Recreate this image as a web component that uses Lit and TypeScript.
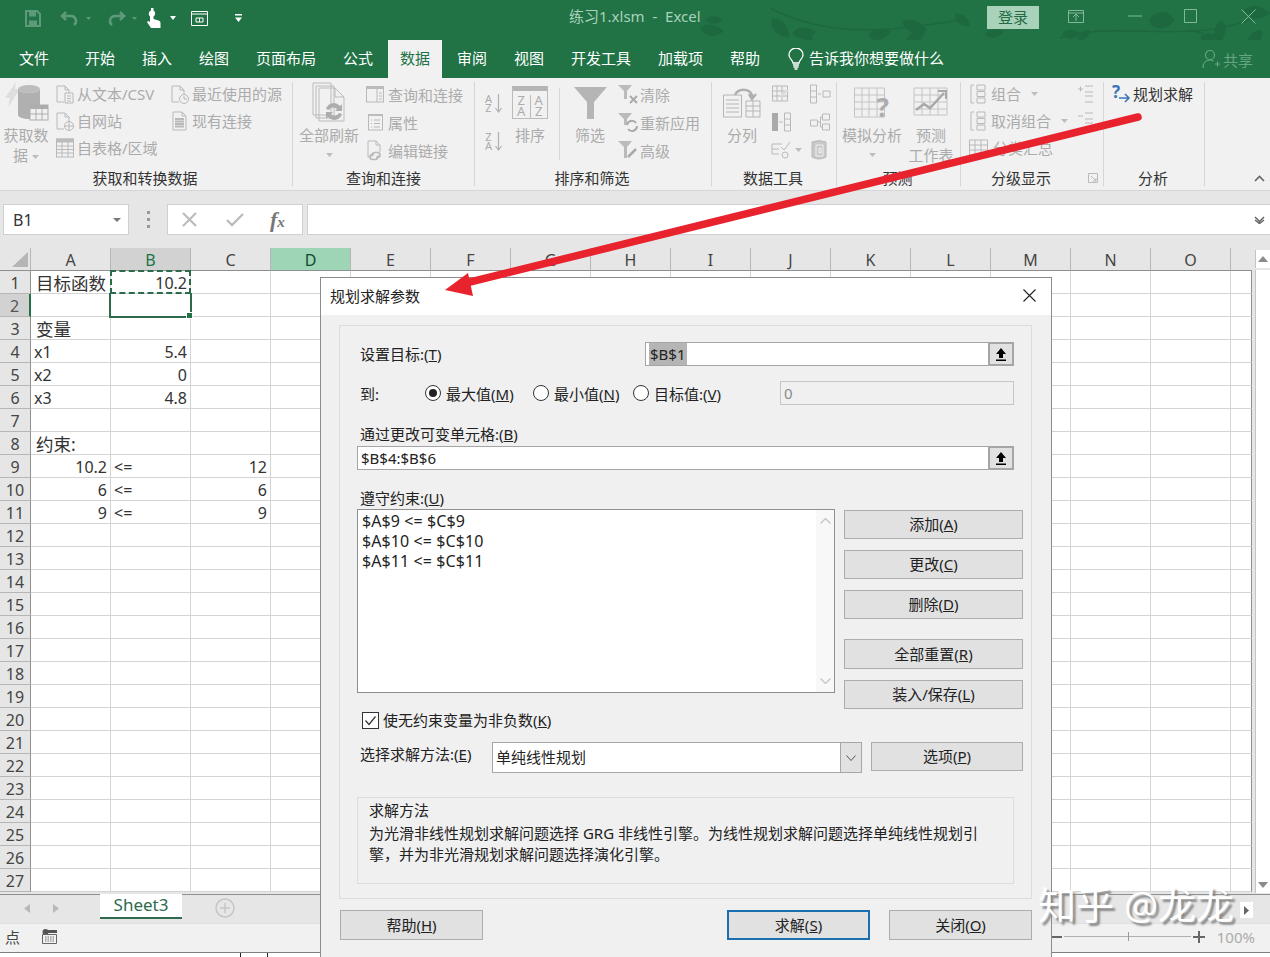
import { LitElement, css, html, nothing } from 'lit';
import { customElement } from 'lit/decorators.js';

const COLS = 'ABCDEFGHIJKLMNO'.split('');
const ROWS = Array.from({ length: 27 }, (_, i) => i + 1);

// cell content of the sheet; r = right aligned, t = text with a small indent
const CELLS: Record<string, { v: string; cls?: string }> = {
  A1: { v: '目标函数', cls: 't' },
  B1: { v: '10.2', cls: 'r' },
  A3: { v: '变量', cls: 't' },
  A4: { v: 'x1' },
  B4: { v: '5.4', cls: 'r' },
  A5: { v: 'x2' },
  B5: { v: '0', cls: 'r' },
  A6: { v: 'x3' },
  B6: { v: '4.8', cls: 'r' },
  A8: { v: '约束:', cls: 't' },
  A9: { v: '10.2', cls: 'r' },
  B9: { v: '<=' },
  C9: { v: '12', cls: 'r' },
  A10: { v: '6', cls: 'r' },
  B10: { v: '<=' },
  C10: { v: '6', cls: 'r' },
  A11: { v: '9', cls: 'r' },
  B11: { v: '<=' },
  C11: { v: '9', cls: 'r' },
};

const TABS = [
  { t: '文件', w: 54, gap: 12 },
  { t: '开始', w: 54, gap: 3 },
  { t: '插入', w: 54, gap: 3 },
  { t: '绘图', w: 54, gap: 3 },
  { t: '页面布局', w: 84, gap: 3 },
  { t: '公式', w: 54, gap: 3 },
  { t: '数据', w: 54, gap: 3, active: true },
  { t: '审阅', w: 54, gap: 3 },
  { t: '视图', w: 54, gap: 3 },
  { t: '开发工具', w: 84, gap: 3 },
  { t: '加载项', w: 69, gap: 3 },
  { t: '帮助', w: 54, gap: 3 },
];

// x, y, rotation, scale of each leaf in the title bar picture
const LEAVES = [
  [700, 28, 30, 1], [722, 20, 200, 0.7], [772, 18, 70, 1.1], [792, 33, 20, 1], [812, 36, 150, 0.8],
  [868, 36, 10, 1], [902, 22, 40, 1.1], [925, 32, 170, 1], [955, 14, 60, 0.8], [985, 34, 15, 0.8],
  [1062, 34, 20, 0.8], [1090, 30, 160, 0.7], [1150, 24, 10, 1.1], [1172, 16, 190, 1], [1200, 36, 40, 1.2],
  [1222, 20, 120, 1], [1212, 46, 80, 0.8], [1244, 10, 30, 1.1], [1262, 30, 150, 1],
];

const u = (before: string, key: string, after = ')') => html`${before}<u>${key}</u>${after}`;

const docText = html`<svg class="i" width="20" height="20" viewBox="0 0 20 20"><path d="M2 2h8l4 4v3 M2 2v16h7 M10 2v4h4 M10 9h8v10h-8z M12 12h4M12 14.500h4M12 17h4" fill="none"/></svg>`;
const docWeb = html`<svg class="i" width="20" height="20" viewBox="0 0 20 20"><path d="M2 2h8l4 4v5 M2 2v16h7 M10 2v4h4" fill="none"/><circle cx="14" cy="15" r="4.500" fill="none"/><path d="M9.500 15h9M14 10.500v9" fill="none"/></svg>`;
const docClock = html`<svg class="i" width="20" height="20" viewBox="0 0 20 20"><path d="M2 2h8l4 4v5 M2 2v16h7 M10 2v4h4" fill="none"/><circle cx="14" cy="15" r="4.500" fill="none"/><path d="M14 12v3h3" fill="none"/></svg>`;
const docLines = html`<svg class="i" width="20" height="20" viewBox="0 0 20 20"><path d="M3 1h9l4 4v14H3z M12 1v4h4" fill="none"/><path d="M5 8h9M5 10.500h9M5 13h9M5 15.500h9" stroke-width="2" fill="none"/></svg>`;
const tableIcon = html`<svg class="i" width="20" height="22" viewBox="0 0 20 22"><rect x="1.500" y="2" width="17" height="18" fill="none"/><rect x="1" y="1.500" width="18" height="4" fill="#bbb" stroke="none"/><path d="M1.500 9h17M1.500 12.500h17M1.500 16h17M7 5v15M13 5v15" fill="none"/></svg>`;
const queryIcon = html`<svg class="i" width="20" height="20" viewBox="0 0 20 20"><rect x="1.500" y="3" width="17" height="15" fill="none"/><rect x="1" y="2" width="18" height="3" fill="#bbb" stroke="none"/><path d="M12 5v13M14 9h3M14 12h3M14 15h3" fill="none"/></svg>`;
const propIcon = html`<svg class="i" width="20" height="20" viewBox="0 0 20 20"><rect x="3.500" y="3" width="14" height="15" fill="none"/><rect x="3" y="2" width="15" height="2" fill="#bbb" stroke="none"/><path d="M6 8h1M9 8h6M6 11.500h1M9 11.500h6M6 15h1M9 15h6" fill="none"/></svg>`;
const linkIcon = html`<svg class="i" width="20" height="22" viewBox="0 0 20 22"><path d="M3 2h8l4 4v7 M3 2v16h3 M11 2v4h4" fill="none"/><path d="M9 15.500h-1.500a2.500 2.500 0 0 0 0 5h3a2.500 2.500 0 0 0 2-4 M11 18.500h1.500a2.500 2.500 0 0 0 0-5h-3a2.500 2.500 0 0 0-2 4" fill="none" stroke-width="1.600"/></svg>`;
const chevron = html`<svg class="caret" width="7" height="4" viewBox="0 0 7 4"><path d="M0 0h7L3.500 4z" fill="#bdbdbd"/></svg>`;
const sortArrow = html`<svg width="7" height="19" viewBox="0 0 7 19"><path d="M3.500 0v18M.5 14l3 4 3-4" fill="none" stroke="#b0b0b0" stroke-width="1.200"/></svg>`;

@customElement('app-root')
export class AppRoot extends LitElement {
  private titleBar() {
    return html`
      <div class="title">
        <svg class="leaves" width="1270" height="60" viewBox="0 0 1270 60">
          ${LEAVES.map(([x, y, r, s]) => html`<svg x="0" y="0" width="1270" height="60" style="overflow:visible"><path transform="translate(${x} ${y}) rotate(${r}) scale(${s})" d="M0 0C3-8 11-12 22-9C19 0 9 6 0 0Z" fill="#1e6840"/></svg>`)}
          <path d="M770 8C830 40 900 30 960 20M1060 38C1120 18 1190 50 1270 12M1190 30C1210 34 1225 45 1216 50" fill="none" stroke="#1e6840" stroke-width="1.500"/>
        </svg>
        <div class="qat">
          <svg class="q" style="margin-left:25px" width="16" height="17" viewBox="0 0 16 17"><path d="M1 1h11l3 3v12H1z" fill="none" stroke="#5d9a7a" stroke-width="2"/><path d="M4 1.500h7v5H4zM4 10.500h8v5H4z" fill="#5d9a7a"/></svg>
          <svg class="q" style="margin-left:19px" width="20" height="17" viewBox="0 0 20 17"><path d="M6 2L2 6l4 4M2 6h9a5 5 0 0 1 3 9" fill="none" stroke="#5d9a7a" stroke-width="2.500"/></svg>
          <svg class="q" style="margin-left:6px" width="5" height="3" viewBox="0 0 5 3"><path d="M0 0h5L2.500 3z" fill="#5d9a7a"/></svg>
          <svg class="q" style="margin-left:15px" width="20" height="17" viewBox="0 0 20 17"><path d="M14 2l4 4-4 4M18 6H9a5 5 0 0 0-3 9" fill="none" stroke="#5d9a7a" stroke-width="2.500"/></svg>
          <svg class="q" style="margin-left:6px" width="5" height="3" viewBox="0 0 5 3"><path d="M0 0h5L2.500 3z" fill="#5d9a7a"/></svg>
          <svg class="q" style="margin-left:8px" width="16" height="22" viewBox="0 0 16 22"><path d="M6 1h2.500v2.500a3.500 3.500 0 0 1 0 6V12l5 1.500c1.500.5 2 1 2 3V21H6l-4-6 1-1 2 1V9.500a3.500 3.500 0 0 1 1-6z" fill="#fff"/></svg>
          <svg class="q" style="margin-left:9px" width="6" height="4" viewBox="0 0 6 4"><path d="M0 0h6L3 4z" fill="#fff"/></svg>
          <svg class="q" style="margin-left:15px" width="17" height="15" viewBox="0 0 17 15"><path d="M.5.500h16v14H.5zM.5 3h16M5 7h7v4H5zM8.500 7v4" fill="none" stroke="#fff"/></svg>
          <svg class="q" style="margin-left:27px" width="7" height="8" viewBox="0 0 7 8"><path d="M0 0h7v1.500H0zM0 3.500h7L3.500 8z" fill="#fff"/></svg>
        </div>
        <div class="doc-name">练习1.xlsm&nbsp; -&nbsp; Excel</div>
        <div class="signin">登录</div>
        <svg class="wc" style="margin-left:29px" width="16" height="16" viewBox="0 0 16 16"><path d="M.5 2.500h15v12H.5zM.5 5h15M5 9l3-3 3 3M8 6v7" fill="none" stroke="#83b99b"/></svg>
        <svg class="wc" style="margin-left:44px" width="14" height="2" viewBox="0 0 14 2"><path d="M0 1h14" stroke="#83b99b"/></svg>
        <svg class="wc" style="margin-left:42px" width="13" height="14" viewBox="0 0 13 14"><path d="M.5.500h12v13H.5z" fill="none" stroke="#83b99b"/></svg>
        <svg class="wc" style="margin-left:44px" width="15" height="15" viewBox="0 0 15 15"><path d="M.5.500l14 14M14.500.500l-14 14" stroke="#83b99b"/></svg>
      </div>`;
  }

  private tabBar() {
    return html`
      <div class="tabs">
        ${TABS.map(
          (t) => html`<div class="tab ${t.active ? 'on' : ''}" style="width:${t.w}px;margin-right:${t.gap}px">${t.t}</div>`,
        )}
        <svg class="bulb" width="16" height="22" viewBox="0 0 16 22"><path d="M5 15c0-3-4-4-4-8a7 7 0 0 1 14 0c0 4-4 5-4 8z" fill="none" stroke="#fff" stroke-width="1.300"/><path d="M5 17h6M5.500 19h5M6.500 21h3" stroke="#fff" stroke-width="1.300"/></svg>
        <div class="tell">告诉我你想要做什么</div>
        <div class="share">
          <svg width="18" height="20" viewBox="0 0 18 20"><circle cx="8" cy="6" r="4.500" fill="none" stroke="#68a583" stroke-width="1.200"/><path d="M1 19c0-5 3-8 7-8 1.500 0 2.500.5 3.500 1M13 15h5M15.500 12.500v5" fill="none" stroke="#68a583" stroke-width="1.200"/></svg>
          <span>共享</span>
        </div>
      </div>`;
  }

  private ribbon() {
    return html`
      <div class="ribbon">
        <section style="width:293px">
          <div class="body">
            <div class="big" style="width:52px">
              <div class="ico">
                <svg width="46" height="44" viewBox="0 0 46 44">
                  <path d="M13 1L2 17l5 0-2 9L17 8l-5 0z" fill="#dedede"/>
                  <ellipse cx="26" cy="8" rx="11" ry="4" fill="#bdbdbd"/>
                  <path d="M15 8v26c0 2 5 4 11 4s11-2 11-4V8c0 2-5 4-11 4S15 10 15 8z" fill="#b0b0b0"/>
                  <rect x="27" y="24" width="18" height="15" fill="#f1f1f1" stroke="#adadad"/>
                  <rect x="27" y="24" width="18" height="4" fill="#adadad"/>
                  <path d="M27 33h18M33 28v11M39 28v11" stroke="#adadad"/>
                </svg>
              </div>
              <span>获取数</span><span>据 ${chevron}</span>
            </div>
            <div class="col" style="width:115px;margin-left:3px">
              <div class="sm">${docText}<span>从文本/CSV</span></div>
              <div class="sm">${docWeb}<span>自网站</span></div>
              <div class="sm">${tableIcon}<span>自表格/区域</span></div>
            </div>
            <div class="col">
              <div class="sm">${docClock}<span>最近使用的源</span></div>
              <div class="sm">${docLines}<span>现有连接</span></div>
            </div>
          </div>
          <footer>获取和转换数据</footer>
        </section>
        <section style="width:182px">
          <div class="body">
            <div class="big" style="width:60px;margin-left:6px">
              <div class="ico">
                <svg width="36" height="44" viewBox="0 0 36 44">
                  <path d="M2 2h18v32H2zM5 5h18v32H5zM8 7h16l9 9v24H8zM24 7v9h9" fill="#f1f1f1" stroke="#bbb"/>
                  <path d="M15 28a8 8 0 0 1 14-3l2-2v7h-7l2-2a5 5 0 0 0-8 1zM31 33a8 8 0 0 1-14 3l-2 2v-7h7l-2 2a5 5 0 0 0 8-1z" fill="#adadad"/>
                </svg>
              </div>
              <span>全部刷新</span><span class="cr">${chevron}</span>
            </div>
            <div class="col tall" style="margin-left:6px">
              <div class="sm">${queryIcon}<span>查询和连接</span></div>
              <div class="sm">${propIcon}<span>属性</span></div>
              <div class="sm">${linkIcon}<span>编辑链接</span></div>
            </div>
          </div>
          <footer class="f2">查询和连接</footer>
        </section>
        <section style="width:237px">
          <div class="body">
            <div class="az">
              <div class="azrow"><div class="azl"><span>A</span><span>Z</span></div>${sortArrow}</div>
              <div class="azrow"><div class="azl"><span>Z</span><span>A</span></div>${sortArrow}</div>
            </div>
            <div class="big" style="width:36px;margin-left:10px">
              <div class="ico">
                <div class="sortbox">
                  <div class="azl"><span>Z</span><span>A</span></div>
                  <div class="azl"><span>A</span><span>Z</span></div>
                </div>
              </div>
              <span>排序</span>
            </div>
            <div class="vsep" style="margin-left:11px"></div>
            <div class="big" style="width:34px;margin-left:13px">
              <div class="ico">
                <svg width="33" height="34" viewBox="0 0 33 34"><path d="M0 1h33L20 16v17h-7V16z" fill="#b5b5b5"/></svg>
              </div>
              <span>筛选</span>
            </div>
            <div class="col tall" style="margin-left:10px">
              <div class="sm fn">
                <svg class="i2" width="22" height="22" viewBox="0 0 22 22"><path d="M1 2h14L10 8v8H7V8z" fill="#bbb"/><path d="M13 13l7 7M20 13l-7 7" stroke="#aaa" stroke-width="2"/></svg><span>清除</span>
              </div>
              <div class="sm fn">
                <svg class="i2" width="22" height="22" viewBox="0 0 22 22"><path d="M1 2h14L10 8v6H7V8z" fill="#bbb"/><path d="M10 14a5 5 0 0 1 9-2M20 15a5 5 0 0 1-9 3" fill="none" stroke="#aaa" stroke-width="2"/></svg><span>重新应用</span>
              </div>
              <div class="sm fn">
                <svg class="i2" width="22" height="22" viewBox="0 0 22 22"><path d="M1 2h14L10 8v11H7V8z" fill="#bbb"/><path d="M11 18l8-8" stroke="#aaa" stroke-width="2.500"/></svg><span>高级</span>
              </div>
            </div>
          </div>
          <footer>排序和筛选</footer>
        </section>
        <section style="width:125px">
          <div class="body">
            <div class="big" style="width:38px;margin-left:11px">
              <div class="ico">
                <svg width="38" height="36" viewBox="0 0 38 36"><path d="M.5 10h18v22H.5zM3 15h13M3 19h13M3 23h13M3 27h13" fill="#f1f1f1" stroke="#b5b5b5"/><path d="M23 16h14v16H23zM23 21h14M23 26h14M30 16v16" fill="#f1f1f1" stroke="#b5b5b5"/><path d="M12 10a9 8 0 0 1 17 0v3M26 9l3 5 4-5" fill="none" stroke="#b0b0b0" stroke-width="2.500"/></svg>
              </div>
              <span>分列</span>
            </div>
            <div class="tools">
              <svg class="i" width="20" height="20" viewBox="0 0 20 20"><path d="M1.500 2h15v15h-15zM1.500 7h15M1.500 12h15M6 2v15M11 2v15" fill="none"/><path d="M10 10l6-5 2 2-6 5-2 1z" fill="#ddd" stroke="none"/></svg>
              <svg class="i" width="22" height="20" viewBox="0 0 22 20"><path d="M1.500 1h6v18h-6zM1.500 7h6M1.500 13h6M14 7h7v6h-7zM9 10h3" fill="none"/></svg>
              <svg class="i" width="20" height="20" viewBox="0 0 20 20"><rect x="1" y="1" width="6" height="18" fill="#aaa" stroke="none"/><path d="M13.500 1h6v18h-6zM13.500 7h6M13.500 13h6M8 10h4" fill="none"/></svg>
              <svg class="i" width="22" height="20" viewBox="0 0 22 20"><path d="M1.500 8h7v6h-7zM13.500 2h7v6h-7zM13.500 12h7v6h-7zM8.500 10h3v-5h2M11.500 10v5h2" fill="none"/></svg>
              <div class="dv"><svg class="i" width="22" height="20" viewBox="0 0 22 20"><path d="M1 4h10M1 9h7M1 14h7M1 4v10" fill="none"/><path d="M10 7l3 3 6-8" fill="none"/><circle cx="14" cy="15" r="3" fill="none"/></svg>${chevron}</div>
              <svg class="i" width="20" height="22" viewBox="0 0 20 22"><path d="M3 3q7-3 14 0v15q-7 4-14 0z" fill="#c8c8c8"/><path d="M7 6h7v11H7zM10 9h2v5h-2z" fill="none" stroke="#f1f1f1"/></svg>
            </div>
          </div>
          <footer>数据工具</footer>
        </section>
        <section style="width:124px">
          <div class="body">
            <div class="big" style="width:60px;margin-left:5px">
              <div class="ico">
                <div class="whatif">
                  <svg width="31" height="33" viewBox="0 0 31 33"><path d="M.5 3h30v29H.5zM.5 10h30M.5 17h30M.5 24h30M8 3v29M15 3v29M23 3v29" fill="#f1f1f1" stroke="#c4c4c4"/></svg>
                  <span>?</span>
                </div>
              </div>
              <span>模拟分析</span><span class="cr">${chevron}</span>
            </div>
            <div class="big" style="width:46px;margin-left:6px">
              <div class="ico">
                <svg width="36" height="36" viewBox="0 0 36 36"><path d="M1 3h33v27H1zM1 10h33M1 17h33M1 24h33M9 3v27M17 3v27M25 3v27" fill="#f1f1f1" stroke="#c4c4c4"/><path d="M3 25l8-6 6 4 14-15" fill="none" stroke="#a8a8a8" stroke-width="2.500"/><path d="M25 6h8v8" fill="none" stroke="#a8a8a8" stroke-width="2"/></svg>
              </div>
              <span>预测</span><span>工作表</span>
            </div>
          </div>
          <footer>预测</footer>
        </section>
        <section style="width:143px">
          <div class="body outline">
            <div class="col" style="margin-left:7px">
              <div class="sm ol">${this.outlineIcon()}<span>组合</span>${chevron}
                <svg class="pm" width="16" height="18" viewBox="0 0 16 18"><path d="M0 4h5M2.500 1.500v5M7 1h8M7 7h8M7 11h8M7 17h8" fill="none"/></svg>
              </div>
              <div class="sm ol">${this.outlineIcon()}<span>取消组合</span>${chevron}
                <svg class="pm p2" width="16" height="18" viewBox="0 0 16 18"><path d="M0 4h5M7 1h8M7 7h8M7 11h8M7 17h8" fill="none"/></svg>
              </div>
              <div class="sm ol">
                <svg class="i" width="22" height="20" viewBox="0 0 22 20"><path d="M1.500 2h18v15h-18zM1.500 7h18M1.500 12h18M7 2v15M13 2v15" fill="none"/></svg><span>分类汇总</span>
              </div>
            </div>
          </div>
          <footer class="f6">分级显示
            <svg class="launch" width="10" height="10" viewBox="0 0 10 10"><path d="M.5.500h9v9h-9zM3 3l5 5M8 5v3H5" fill="none" stroke="#bbb"/></svg>
          </footer>
        </section>
        <section style="width:101px">
          <div class="body">
            <div class="sm solver">
              <div class="sq">
                <span>?</span>
                <svg width="12" height="10" viewBox="0 0 12 10"><path d="M0 5h10M6 1l4 4-4 4" fill="none" stroke="#3f74b5" stroke-width="1.600"/></svg>
              </div>
              <span>规划求解</span>
            </div>
          </div>
          <footer>分析</footer>
        </section>
        <svg class="collapse" width="11" height="7" viewBox="0 0 11 7"><path d="M1 6l4.500-4.500L10 6" fill="none" stroke="#666" stroke-width="1.600"/></svg>
      </div>`;
  }

  private outlineIcon() {
    return html`<svg class="i" width="20" height="20" viewBox="0 0 20 20"><path d="M6 1h-3v18h3M9 1h8v5H9zM9 7.500h8v5H9zM9 14h8v5H9z" fill="none"/></svg>`;
  }

  private formulaBar() {
    return html`
      <div class="fbar">
        <div class="namebox"><span>B1</span><svg width="8" height="4" viewBox="0 0 8 4"><path d="M0 0h8L4 4z" fill="#777"/></svg></div>
        <div class="grip"><i></i><i></i><i></i></div>
        <div class="fxbox">
          <svg class="fx1" width="17" height="17" viewBox="0 0 17 17"><path d="M2 2l13 13M15 2L2 15" stroke="#bcbcbc" stroke-width="2.200"/></svg>
          <svg class="fx2" width="18" height="15" viewBox="0 0 18 15"><path d="M1 8l5 5L17 2" fill="none" stroke="#bcbcbc" stroke-width="2.400"/></svg>
          <span class="fx">f<small>x</small></span>
        </div>
        <div class="finput">
          <svg width="11" height="8" viewBox="0 0 11 8"><path d="M1 1l4.500 4.500L10 1M1 4l4.500 3.500L10 4" fill="none" stroke="#666" stroke-width="1.500"/></svg>
        </div>
      </div>`;
  }

  private sheet() {
    return html`
      <div class="sheetwrap">
        <div class="sheet">
          <div class="hd corner"><svg width="16" height="15" viewBox="0 0 16 15"><path d="M16 0v15H0z" fill="#b5b5b5"/></svg></div>
          ${COLS.map((c) => html`<div class="hd col-h ${c === 'B' ? 'sel' : ''} ${c === 'D' ? 'act' : ''}">${c}</div>`)}
          <div class="hd filler"></div>
          ${ROWS.map(
            (r) => html`
              <div class="hd row-h ${r === 2 ? 'sel' : ''}">${r}</div>
              ${COLS.map((c) => {
                const cell = CELLS[c + r];
                return html`<div class="cell ${cell?.cls ?? ''}">${cell ? cell.v : nothing}</div>`;
              })}
              <div class="cell last"></div>`,
          )}
          <div class="ants"></div>
          <div class="cursor"><b></b></div>
        </div>
        <div class="vscroll">
          <div class="varrow"><svg width="10" height="6" viewBox="0 0 10 6"><path d="M0 6h10L5 0z" fill="#8a8a8a"/></svg></div>
          <div class="vthumb"></div>
          <div class="varrow down"><svg width="10" height="6" viewBox="0 0 10 6"><path d="M0 0h10L5 6z" fill="#8a8a8a"/></svg></div>
        </div>
      </div>`;
  }

  private sheetTabs() {
    return html`
      <div class="stabs">
        <svg class="nav" width="6" height="9" viewBox="0 0 6 9"><path d="M6 0v9L0 4.500z" fill="#b8b8b8"/></svg>
        <svg class="nav n2" width="6" height="9" viewBox="0 0 6 9"><path d="M0 0v9l6-4.500z" fill="#b8b8b8"/></svg>
        <div class="stab">Sheet3</div>
        <svg class="plus" width="20" height="20" viewBox="0 0 20 20"><circle cx="10" cy="10" r="9" fill="none" stroke="#c6c6c6" stroke-width="1.500"/><path d="M5 10h10M10 5v10" stroke="#c6c6c6" stroke-width="1.500"/></svg>
        <div class="hscroll-end"><svg width="5" height="9" viewBox="0 0 5 9"><path d="M0 0v9l5-4.500z" fill="#666"/></svg></div>
      </div>
      <div class="status">
        <span class="pt">点</span>
        <svg class="macro" width="15" height="15" viewBox="0 0 15 15"><circle cx="3.500" cy="3" r="3" fill="#555"/><rect x="4" y="1" width="11" height="3" fill="#555"/><path d="M.5 5.500h14v9H.5z" fill="#f1f1f1" stroke="#666"/><path d="M3 8h9M3 10h9M3 12h9" stroke="#777" stroke-dasharray="1.500 1"/></svg>
        <div class="zoom">
          <svg width="12" height="2" viewBox="0 0 12 2"><path d="M0 1h12" stroke="#666" stroke-width="2"/></svg>
          <div class="track"><i></i></div>
          <svg width="12" height="12" viewBox="0 0 12 12"><path d="M0 6h12M6 0v12" stroke="#666" stroke-width="2"/></svg>
          <span>100%</span>
        </div>
      </div>
      <div class="desk"><i style="margin-left:240px"></i><i style="margin-left:26px"></i></div>`;
  }

  private dialog() {
    return html`
      <div class="dlg">
        <div class="dlg-title">
          <span>规划求解参数</span>
          <svg width="13" height="13" viewBox="0 0 13 13"><path d="M.5.500l12 12M12.500.500l-12 12" stroke="#222" stroke-width="1.100"/></svg>
        </div>
        <div class="dlg-body">
          <div class="panel">
            <div class="row r1">
              <label class="l1">设置目标:(${u('', 'T')}</label>
              <div class="input t1"><span class="hl">$B$1</span>${this.refBtn()}</div>
            </div>
            <div class="row r2">
              <label class="l2">到:</label>
              <span class="radio on"></span><span class="rl w1">最大值(${u('', 'M')}</span>
              <span class="radio"></span><span class="rl w2">最小值(${u('', 'N')}</span>
              <span class="radio"></span><span class="rl w3">目标值:(${u('', 'V')}</span>
              <div class="input off">0</div>
            </div>
            <label class="lab l3">通过更改可变单元格:(${u('', 'B')}</label>
            <div class="input wide">$B$4:$B$6${this.refBtn()}</div>
            <label class="lab l4">遵守约束:(${u('', 'U')}</label>
            <div class="row listrow">
              <div class="list">
                <div class="lines">
                  <div>$A$9 &lt;= $C$9</div>
                  <div>$A$10 &lt;= $C$10</div>
                  <div>$A$11 &lt;= $C$11</div>
                </div>
                <div class="lscroll">
                  <svg width="11" height="6" viewBox="0 0 11 6"><path d="M.5 5.500l5-5 5 5" fill="none" stroke="#c4c4c4" stroke-width="1.300"/></svg>
                  <svg width="11" height="6" viewBox="0 0 11 6"><path d="M.5.500l5 5 5-5" fill="none" stroke="#c4c4c4" stroke-width="1.300"/></svg>
                </div>
              </div>
              <div class="btns">
                <button>添加(${u('', 'A')}</button>
                <button>更改(${u('', 'C')}</button>
                <button>删除(${u('', 'D')}</button>
                <button class="gap">全部重置(${u('', 'R')}</button>
                <button>装入/保存(${u('', 'L')}</button>
              </div>
            </div>
            <div class="row chk">
              <svg width="17" height="17" viewBox="0 0 17 17"><rect x=".5" y=".5" width="16" height="16" fill="#fff" stroke="#333"/><path d="M3.500 8.500l3.500 4 6.500-8" fill="none" stroke="#333" stroke-width="1.200"/></svg>
              <span>使无约束变量为非负数(${u('', 'K')}</span>
            </div>
            <div class="row method">
              <label>选择求解方法:(${u('', 'E')}</label>
              <div class="select">
                <span>单纯线性规划</span>
                <div class="sbtn"><svg width="10" height="6" viewBox="0 0 10 6"><path d="M.5.500l4.500 5 4.500-5" fill="none" stroke="#555"/></svg></div>
              </div>
              <button class="opt">选项(${u('', 'P')}</button>
            </div>
            <div class="desc">
              <div class="dt">求解方法</div>
              <div class="dl">为光滑非线性规划求解问题选择 GRG 非线性引擎。为线性规划求解问题选择单纯线性规划引</div>
              <div class="dl">擎，并为非光滑规划求解问题选择演化引擎。</div>
            </div>
          </div>
          <div class="foot">
            <button>帮助(${u('', 'H')}</button>
            <button class="pri">求解(${u('', 'S')}</button>
            <button>关闭(${u('', 'O')}</button>
          </div>
        </div>
      </div>`;
  }

  private refBtn() {
    return html`<div class="ref"><svg width="12" height="13" viewBox="0 0 12 13"><path d="M6 0L1 6h3v4h4V6h3zM1 11.500h10v1.500H1z" fill="#000"/></svg></div>`;
  }

  render() {
    return html`
      ${this.titleBar()} ${this.tabBar()} ${this.ribbon()} ${this.formulaBar()} ${this.sheet()} ${this.sheetTabs()} ${this.dialog()}
      <svg class="arrow" width="1270" height="957" viewBox="0 0 1270 957">
        <path d="M1138 117L462 284" stroke="#e8232e" stroke-width="7.500" stroke-linecap="round"/>
        <path d="M445 290L468 273L473 296z" fill="#e8232e"/>
      </svg>
      <div class="mark">知乎 @龙龙</div>
    `;
  }

  static styles = css`
    :host {
      display: block;
      position: relative;
      width: 1270px;
      height: 957px;
      overflow: hidden;
      background: #fff;
      font-family: "Noto Sans", "Noto Sans CJK SC", sans-serif;
      font-size: 15px;
      color: #333;
    }
    .title {
      position: relative;
      display: flex;
      align-items: center;
      height: 40px;
      background: #217346;
    }
    .leaves {
      position: absolute;
      left: 0;
      top: 0;
    }
    .qat {
      position: relative;
      display: flex;
      align-items: center;
      width: 569px;
      margin-top: -4px;
    }
    .q {
      flex: none;
    }
    .wc {
      position: relative;
      flex: none;
      margin-top: -8px;
    }
    .doc-name {
      position: relative;
      width: 418px;
      margin-top: -9px;
      color: #a8d2bb;
      font-size: 15px;
    }
    .signin {
      position: relative;
      width: 52px;
      height: 23px;
      line-height: 23px;
      margin-top: -6px;
      text-align: center;
      background: #a8d3ba;
      color: #256a45;
    }
    .tabs {
      position: relative;
      display: flex;
      align-items: stretch;
      height: 38px;
      padding-left: 7px;
      background: #217346;
      color: #fff;
    }
    .tab {
      line-height: 37px;
      text-align: center;
      flex: none;
    }
    .tab.on {
      background: #f1f1f1;
      color: #217346;
    }
    .bulb {
      margin: 8px 0 0 13px;
      flex: none;
    }
    .tell {
      margin-left: 5px;
      line-height: 37px;
      flex: none;
    }
    .share {
      display: flex;
      align-items: center;
      gap: 3px;
      margin-left: auto;
      margin-right: 17px;
      color: #68a583;
    }
    .ribbon {
      position: relative;
      display: flex;
      height: 113px;
      background: #f1f1f1;
      border-bottom: 1px solid #d6d6d6;
      box-sizing: border-box;
    }
    section {
      position: relative;
      box-sizing: border-box;
      flex: none;
    }
    section::after {
      content: "";
      position: absolute;
      right: 0;
      top: 4px;
      bottom: 4px;
      width: 1px;
      background: #d6d6d6;
    }
    .body {
      display: flex;
      height: 87px;
      padding-top: 2px;
      box-sizing: border-box;
      color: #ababab;
    }
    footer {
      position: relative;
      height: 25px;
      padding-right: 3px;
      line-height: 27px;
      text-align: center;
      color: #333;
    }
    footer.f2 {
      padding-right: 1px;
    }
    footer.f6 {
      padding-right: 23px;
    }
    .big {
      display: flex;
      flex-direction: column;
      align-items: center;
      line-height: 20px;
      white-space: nowrap;
      flex: none;
    }
    .ico {
      display: flex;
      align-items: center;
      justify-content: center;
      height: 45px;
    }
    .cr {
      line-height: 16px;
    }
    .caret {
      vertical-align: middle;
    }
    .col {
      display: flex;
      flex-direction: column;
      flex: none;
    }
    .sm {
      display: flex;
      align-items: center;
      gap: 2px;
      height: 27px;
      white-space: nowrap;
    }
    .tall .sm {
      height: 28px;
      gap: 3px;
    }
    .tall .fn {
      gap: 1px;
    }
    .i {
      stroke: #b9b9b9;
      flex: none;
    }
    .i2 {
      flex: none;
    }
    .az {
      display: flex;
      flex-direction: column;
      justify-content: space-between;
      width: 18px;
      height: 57px;
      margin: 14px 0 0 9px;
      flex: none;
    }
    .azrow {
      display: flex;
      align-items: flex-start;
      gap: 2px;
    }
    .azl {
      display: flex;
      flex-direction: column;
      align-items: center;
      width: 9px;
      font-size: 11px;
      line-height: 9px;
      color: #ababab;
    }
    .sortbox {
      display: flex;
      width: 36px;
      height: 33px;
      box-sizing: border-box;
      padding-top: 9px;
      background: linear-gradient(#b5b5b5 5px, transparent 5px);
      border: 1px solid #bbb;
      border-top: 0;
    }
    .sortbox .azl {
      flex: 1;
      font-size: 13px;
      line-height: 11px;
    }
    .sortbox .azl + .azl {
      border-left: 1px solid #bbb;
    }
    .whatif {
      position: relative;
      display: flex;
      width: 36px;
      height: 36px;
    }
    .whatif span {
      position: absolute;
      right: 1px;
      bottom: 1px;
      font-size: 26px;
      line-height: 26px;
      font-weight: 700;
      color: #adadad;
    }
    .vsep {
      width: 1px;
      height: 72px;
      margin-top: 8px;
      background: #d6d6d6;
    }
    .tools {
      display: grid;
      grid-template-columns: 38px 24px;
      grid-auto-rows: 28px;
      align-items: center;
      margin-left: 10px;
    }
    .dv {
      display: flex;
      align-items: center;
      gap: 2px;
    }
    .ol {
      position: relative;
      gap: 3px;
    }
    .ol .caret {
      margin-left: 7px;
    }
    .pm {
      position: absolute;
      left: 110px;
      top: 5px;
      stroke: #b9b9b9;
    }
    .launch {
      position: absolute;
      right: 6px;
      top: 8px;
    }
    .solver {
      height: 22px;
      margin: 2px 0 0 8px;
      color: #333;
      gap: 1px;
    }
    .sq {
      position: relative;
      width: 20px;
      height: 22px;
      flex: none;
    }
    .sq span {
      position: absolute;
      left: 0;
      top: -1px;
      font-size: 17px;
      line-height: 22px;
      font-weight: 700;
      color: #3f74b5;
    }
    .sq svg {
      position: absolute;
      left: 7px;
      top: 11px;
    }
    .collapse {
      position: absolute;
      right: 5px;
      bottom: 8px;
    }
    .fbar {
      display: flex;
      height: 57px;
      padding-top: 13px;
      box-sizing: border-box;
      background: #e6e6e6;
    }
    .namebox {
      display: flex;
      align-items: center;
      justify-content: space-between;
      width: 126px;
      height: 31px;
      margin-left: 3px;
      padding: 0 7px 0 9px;
      box-sizing: border-box;
      background: #fff;
      border: 1px solid #d0d0d0;
      font-size: 16px;
    }
    .grip {
      display: flex;
      flex-direction: column;
      justify-content: center;
      gap: 4px;
      width: 38px;
      height: 31px;
      align-items: center;
    }
    .grip i {
      width: 3px;
      height: 3px;
      background: #999;
    }
    .fxbox {
      display: flex;
      align-items: center;
      width: 136px;
      height: 31px;
      box-sizing: border-box;
      background: #fff;
      border: 1px solid #d0d0d0;
    }
    .fx1 {
      margin-left: 13px;
      flex: none;
    }
    .fx2 {
      margin-left: 28px;
      flex: none;
    }
    .fx {
      margin-left: 26px;
      font-family: "Liberation Serif", serif;
      font-style: italic;
      font-weight: 700;
      font-size: 22px;
      color: #777;
    }
    .fx small {
      font-size: 15px;
    }
    .finput {
      display: flex;
      align-items: center;
      justify-content: flex-end;
      flex: 1;
      height: 31px;
      margin-left: 4px;
      padding-right: 5px;
      box-sizing: border-box;
      background: #fff;
      border: 1px solid #d0d0d0;
      border-right: 0;
    }
    .sheetwrap {
      display: flex;
      height: 646px;
      overflow: hidden;
      background: #e6e6e6;
    }
    .sheet {
      position: relative;
      display: grid;
      grid-template-columns: 31px repeat(15, 80px) 21px;
      grid-auto-rows: 23px;
      flex: none;
    }
    .hd {
      display: flex;
      align-items: center;
      justify-content: center;
      padding-top: 2px;
      box-sizing: border-box;
      background: #e6e6e6;
      color: #444;
      font-size: 16px;
      border-right: 1px solid #b6b6b6;
      border-bottom: 1px solid #8f8f8f;
    }
    .row-h {
      border-bottom-color: #b6b6b6;
      border-right-color: #8f8f8f;
    }
    .corner {
      justify-content: flex-end;
      padding: 0 2px 0 0;
    }
    .filler {
      border-right: 0;
    }
    .hd.sel {
      background: #d2d2d2;
      color: #217346;
    }
    .row-h.sel {
      border-right: 2px solid #217346;
      color: #555;
    }
    .hd.act {
      background: #9fd5b7;
      color: #0e4a2b;
    }
    .cell {
      box-sizing: border-box;
      padding: 1px 3px 0 3px;
      line-height: 23px;
      font-size: 16px;
      white-space: nowrap;
      background: #fff;
      border-right: 1px solid #d4d4d4;
      border-bottom: 1px solid #d4d4d4;
      color: #333;
    }
    .cell.last {
      border-right-color: #8f8f8f;
    }
    .cell.r {
      text-align: right;
    }
    .cell.t {
      padding-left: 5px;
      font-size: 17.500px;
    }
    .ants {
      position: absolute;
      left: 110px;
      top: 22px;
      width: 81px;
      height: 24px;
      box-sizing: border-box;
      border: 2px dashed #2b6a4a;
    }
    .cursor {
      position: absolute;
      left: 109px;
      top: 45px;
      width: 83px;
      height: 25px;
      box-sizing: border-box;
      border: 2px solid #2b6a4a;
      border-top: 0;
    }
    .cursor b {
      position: absolute;
      right: -3px;
      bottom: -3px;
      width: 5px;
      height: 5px;
      background: #217346;
      border: 1px solid #fff;
    }
    .vscroll {
      display: flex;
      flex-direction: column;
      flex: 1;
      padding: 2px 0 1px 3px;
    }
    .varrow {
      display: flex;
      align-items: center;
      justify-content: center;
      height: 18px;
      background: #fff;
      border-left: 1px solid #c4c4c4;
      flex: none;
    }
    .varrow.down {
      height: 16px;
    }
    .vthumb {
      flex: 1;
      margin-top: 2px;
      background: #fff;
      border-left: 1px solid #c4c4c4;
    }
    .stabs {
      position: relative;
      display: flex;
      align-items: flex-start;
      height: 29px;
      box-sizing: border-box;
      background: #e6e6e6;
      border-top: 1px solid #8f8f8f;
    }
    .nav {
      margin: 9px 0 0 24px;
      flex: none;
    }
    .n2 {
      margin-left: 23px;
    }
    .stab {
      width: 82px;
      height: 25px;
      margin-left: 41px;
      margin-top: -1px;
      box-sizing: border-box;
      background: #fff;
      border-bottom: 2px solid #2f6a4c;
      color: #2f6a4c;
      font-size: 17px;
      line-height: 22px;
      text-align: center;
    }
    .plus {
      margin: 3px 0 0 33px;
      flex: none;
    }
    .hscroll-end {
      position: absolute;
      left: 1240px;
      top: 7px;
      display: flex;
      align-items: center;
      justify-content: center;
      width: 13px;
      height: 16px;
      background: #fff;
    }
    .status {
      display: flex;
      align-items: center;
      height: 30px;
      padding-bottom: 3px;
      box-sizing: border-box;
      background: #f1f1f1;
      border-bottom: 1px solid #7f7f7f;
      border-top: 1px solid #e0e0e0;
    }
    .pt {
      margin-left: 5px;
      font-size: 15px;
      color: #444;
    }
    .macro {
      margin-left: 22px;
      flex: none;
    }
    .zoom {
      display: flex;
      align-items: center;
      margin-left: auto;
      margin-right: 15px;
      color: #ababab;
    }
    .track {
      position: relative;
      width: 127px;
      height: 1px;
      margin: 0 2px;
      background: #b0b0b0;
    }
    .track i {
      position: absolute;
      left: 64px;
      top: -4px;
      width: 1px;
      height: 9px;
      background: #999;
    }
    .zoom span {
      margin-left: 12px;
    }
    .desk {
      display: flex;
      height: 5px;
    }
    .desk i {
      width: 1px;
      height: 5px;
      background: #222;
    }
    .dlg {
      position: absolute;
      left: 320px;
      top: 277px;
      width: 732px;
      height: 690px;
      box-sizing: border-box;
      border: 1px solid #8c8c8c;
      background: #f0f0f0;
      font-size: 15px;
      color: #222;
    }
    .dlg-title {
      display: flex;
      align-items: center;
      justify-content: space-between;
      height: 37px;
      padding: 0 15px 2px 9px;
      box-sizing: border-box;
      background: #fff;
    }
    .dlg-body {
      padding: 10px 18px 0;
    }
    .panel {
      width: 693px;
      height: 574px;
      box-sizing: border-box;
      padding: 16px 8px 0 17px;
      border: 1px solid #dcdcdc;
    }
    .row {
      display: flex;
      align-items: center;
    }
    label {
      white-space: nowrap;
    }
    .input {
      position: relative;
      display: flex;
      align-items: center;
      height: 24px;
      box-sizing: border-box;
      padding-left: 3px;
      background: #fff;
      border: 1px solid #a6a6a6;
      line-height: 22px;
    }
    .r1 {
      height: 24px;
      width: 657px;
    }
    .l1 {
      margin: 0 0 2px 3px;
      width: 285px;
    }
    .t1 {
      width: 369px;
    }
    .hl {
      background: #b5b5b5;
      color: #222;
      padding: 0 1px;
    }
    .ref {
      position: absolute;
      right: -1px;
      top: -1px;
      display: flex;
      align-items: center;
      justify-content: center;
      width: 26px;
      height: 24px;
      box-sizing: border-box;
      background: #e1e1e1;
      border: 2px solid #a6a6a6;
    }
    .r2 {
      margin-top: 15px;
      height: 24px;
      width: 657px;
    }
    .l2 {
      margin-left: 3px;
      width: 65px;
    }
    .radio {
      position: relative;
      width: 16px;
      height: 16px;
      box-sizing: border-box;
      border: 1px solid #333;
      border-radius: 50%;
      background: #fff;
      flex: none;
    }
    .radio.on::after {
      content: "";
      position: absolute;
      left: 3px;
      top: 3px;
      width: 8px;
      height: 8px;
      border-radius: 50%;
      background: #222;
    }
    .rl {
      margin-left: 5px;
      white-space: nowrap;
    }
    .w1 {
      width: 87px;
    }
    .w2 {
      width: 79px;
    }
    .w3 {
      width: 126px;
    }
    .off {
      width: 234px;
      background: #f0f0f0;
      color: #8a8a8a;
      border-color: #c6c6c6;
    }
    .lab {
      display: block;
      height: 18px;
      line-height: 18px;
      margin-left: 3px;
    }
    .l3 {
      margin-top: 20px;
    }
    .wide {
      width: 657px;
      margin-top: 3px;
    }
    .l4 {
      margin-top: 19px;
    }
    .listrow {
      align-items: flex-start;
      margin-top: 2px;
      height: 200px;
    }
    .list {
      display: flex;
      width: 478px;
      height: 184px;
      box-sizing: border-box;
      background: #fff;
      border: 1px solid #8f8f8f;
    }
    .lines {
      flex: 1;
      padding: 1px 0 0 4px;
      font-size: 16px;
      letter-spacing: 0.100px;
      line-height: 20px;
    }
    .lscroll {
      display: flex;
      flex-direction: column;
      justify-content: space-between;
      align-items: center;
      width: 18px;
      padding: 8px 0;
      box-sizing: border-box;
      background: #f8f8f8;
    }
    button {
      display: block;
      font: inherit;
      color: #222;
      background: #e1e1e1;
      border: 1px solid #adadad;
      padding: 0 0 2px;
      border-radius: 0;
    }
    .btns {
      display: flex;
      flex-direction: column;
      gap: 11px;
      margin-left: 9px;
      padding-top: 1px;
    }
    .btns button {
      width: 179px;
      height: 29px;
    }
    .btns .gap {
      margin-top: 9px;
      height: 30px;
    }
    .chk {
      margin: 3px 0 0 5px;
      gap: 4px;
      height: 17px;
      line-height: 15px;
    }
    .method {
      margin-top: 13px;
      height: 31px;
      align-items: flex-start;
    }
    .method label {
      width: 132px;
      margin-left: 3px;
      line-height: 24px;
    }
    .select {
      display: flex;
      align-items: center;
      justify-content: space-between;
      width: 370px;
      height: 31px;
      box-sizing: border-box;
      padding-left: 3px;
      background: #fff;
      border: 1px solid #a6a6a6;
    }
    .select span {
      margin-bottom: 2px;
    }
    .sbtn {
      display: flex;
      align-items: center;
      justify-content: center;
      width: 20px;
      height: 29px;
      background: #e1e1e1;
      border-left: 1px solid #a6a6a6;
    }
    .opt {
      width: 152px;
      height: 29px;
      margin-left: 9px;
    }
    .desc {
      width: 657px;
      height: 87px;
      margin-top: 24px;
      box-sizing: border-box;
      padding: 3px 0 0 11px;
      border: 1px solid #dcdcdc;
    }
    .dt {
      line-height: 19px;
      margin-bottom: 4px;
    }
    .dl {
      margin-top: 2px;
      line-height: 19px;
      white-space: nowrap;
    }
    .foot {
      display: flex;
      gap: 19px;
      margin: 11px 0 0 1px;
      width: 692px;
    }
    .foot button {
      width: 143px;
      height: 30px;
    }
    .foot button:first-child {
      margin-right: auto;
    }
    .foot .pri {
      border: 2px solid #1a6fb0;
    }
    .arrow {
      position: absolute;
      left: 0;
      top: 0;
      pointer-events: none;
    }
    .mark {
      position: absolute;
      left: 1038px;
      top: 877px;
      font-size: 38px;
      line-height: 54px;
      white-space: nowrap;
      color: #fff;
      font-weight: 400;
      text-shadow: 3px 3px 2px #8a8a8a;
    }
  `;
}

declare global {
  interface HTMLElementTagNameMap {
    'app-root': AppRoot;
  }
}
